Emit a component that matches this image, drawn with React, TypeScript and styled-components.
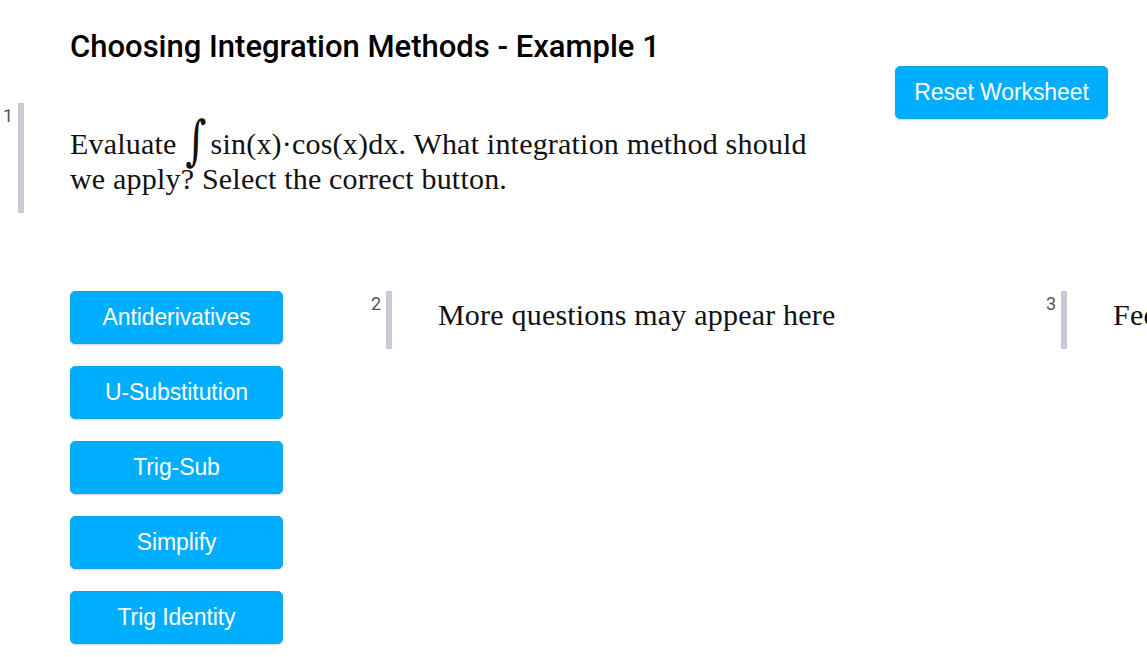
import styled, { createGlobalStyle } from 'styled-components';

const GlobalStyle = createGlobalStyle`
    html, body {
        margin: 0;
        padding: 0;
        background: #ffffff;
        overflow: hidden;
    }
`;

const Page = styled.div`
    width: 1147px;
    height: 657px;
    overflow: hidden;
    position: relative;
`;

const Title = styled.h1`
    margin: 0;
    padding: 29px 0 0 70px;
    font-family: Roboto, "Liberation Sans", sans-serif;
    font-weight: 500;
    font-size: 31px;
    line-height: 36px;
    letter-spacing: 0;
    color: #000;
`;

const Toolbar = styled.div`
    display: flex;
    justify-content: flex-end;
    padding-right: 39px;
    margin-top: 1px;
`;

const BlueButton = styled.button`
    width: 213px;
    height: 53px;
    border: 1px solid #1aa3e0;
    border-radius: 5px;
    background: #00aeff;
    color: #ffffff;
    font-family: "Liberation Sans", Arial, sans-serif;
    font-size: 23px;
    letter-spacing: -0.1px;
    box-shadow: 0 1px 2px rgba(0, 0, 0, 0.18);
    cursor: pointer;
    padding: 0;
`;

const Question = styled.div<{ $width: number }>`
    display: flex;
    flex: 0 0 ${p => p.$width}px;
    align-items: flex-start;
`;

const QNumber = styled.span`
    width: 18px;
    padding-right: 2px;
    padding-top: 2px;
    font-family: Roboto, "Liberation Sans", sans-serif;
    font-size: 18px;
    color: #555;
    text-align: center;
    box-sizing: border-box;
`;

const QBar = styled.div<{ $height: number }>`
    width: 6px;
    height: ${p => p.$height}px;
    background: #cbc8d6;
    flex-shrink: 0;
`;

const QText = styled.p<{ $pad: number; $width?: number }>`
    margin: 0;
    padding: ${p => p.$pad}px 0 0 46px;
    font-family: "Liberation Serif", "DejaVu Serif", serif;
    font-size: 30px;
    letter-spacing: 0.2px;
    line-height: 35px;
    color: #111;
    width: ${p => (p.$width ? `${p.$width}px` : 'auto')};
    white-space: ${p => (p.$width ? 'normal' : 'nowrap')};
`;

const Integral = styled.span`
    display: inline-block;
    font-size: 54px;
    line-height: 20px;
    transform: translateY(5px) scaleX(0.75);
    margin: 0 0 0 -2px;
    font-family: "DejaVu Serif", serif;
`;

const FirstBlock = styled.div`
    margin-top: -16px;
`;

const Row = styled.div`
    display: flex;
    align-items: flex-start;
    margin-top: 78px;
`;

const ButtonColumn = styled.div`
    display: flex;
    flex-direction: column;
    gap: 22px;
    padding-left: 70px;
    flex: 0 0 298px;
`;

const methods = ['Antiderivatives', 'U-Substitution', 'Trig-Sub', 'Simplify', 'Trig Identity'];

export default function App() {
    return (
        <Page>
            <GlobalStyle />
            <Title>Choosing Integration Methods - Example 1</Title>
            <Toolbar>
                <BlueButton>Reset Worksheet</BlueButton>
            </Toolbar>
            <FirstBlock>
                <Question $width={900}>
                    <QNumber>1</QNumber>
                    <QBar $height={110} />
                    <QText $pad={23} $width={760}>
                        Evaluate <Integral>∫</Integral>sin(x)·cos(x)dx. What integration method should we apply? Select the correct button.
                    </QText>
                </Question>
            </FirstBlock>
            <Row>
                <ButtonColumn>
                    {methods.map(m => (
                        <BlueButton key={m}>{m}</BlueButton>
                    ))}
                </ButtonColumn>
                <Question $width={675}>
                    <QNumber>2</QNumber>
                    <QBar $height={58} />
                    <QText $pad={6}>More questions may appear here</QText>
                </Question>
                <Question $width={400}>
                    <QNumber>3</QNumber>
                    <QBar $height={58} />
                    <QText $pad={6}>Feedback</QText>
                </Question>
            </Row>
        </Page>
    );
}
